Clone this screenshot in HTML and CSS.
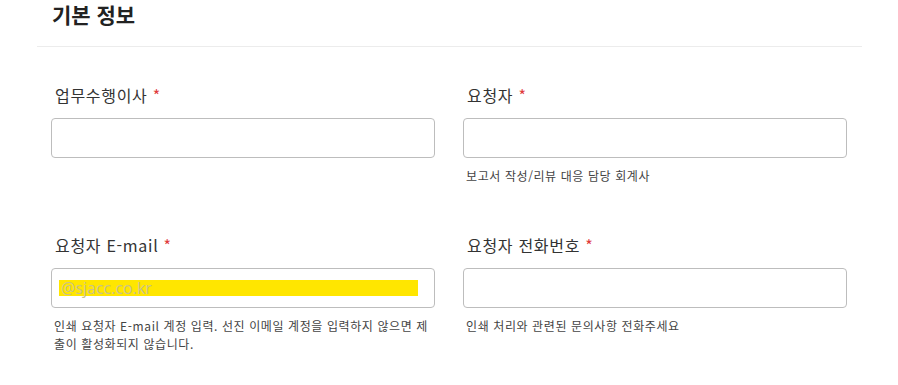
FILE: index.html
```html
<!DOCTYPE html>
<html lang="ko">
<head>
<meta charset="utf-8">
<title>기본 정보</title>
<link rel="stylesheet" href="styles.css">
</head>
<body>
<section class="section">
  <h2 class="title">기본 정보</h2>
  <div class="grid">
    <div class="field">
      <label class="label">업무수행이사 <span class="req">*</span></label>
      <div class="box"></div>
    </div>
    <div class="field">
      <label class="label">요청자 <span class="req">*</span></label>
      <div class="box"></div>
      <p class="help">보고서 작성/리뷰 대응 담당 회계사</p>
    </div>
    <div class="field">
      <label class="label">요청자 E-mail <span class="req">*</span></label>
      <div class="box"><span class="mark">@sjacc.co.kr</span></div>
      <p class="help">인쇄 요청자 E-mail 계정 입력. 선진 이메일 계정을 입력하지 않으면 제출이 활성화되지 않습니다.</p>
    </div>
    <div class="field">
      <label class="label">요청자 전화번호 <span class="req">*</span></label>
      <div class="box"></div>
      <p class="help">인쇄 처리와 관련된 문의사항 전화주세요</p>
    </div>
  </div>
</section>
</body>
</html>
```
FILE: styles.css
```css
html, body {
  margin: 0;
  padding: 0;
  background: #ffffff;
}
body {
  font-family: "Noto Sans CJK KR", "Noto Sans", sans-serif;
  color: #333333;
}
.section {
  margin-left: 37px;
  width: 825px;
}
.title {
  margin: 0;
  padding: 0 15px;
  height: 46px;
  font-size: 21px;
  font-weight: 700;
  line-height: 28px;
  color: #222222;
  border-bottom: 1px solid #ececec;
  box-sizing: content-box;
}
.grid {
  display: grid;
  grid-template-columns: 384px 384px;
  column-gap: 28px;
  row-gap: 48px;
  padding: 36px 14px 0;
}
.field {
  display: flex;
  flex-direction: column;
}
.label {
  padding-left: 4px;
  font-size: 16px;
  line-height: 24px;
  letter-spacing: 0.7px;
  color: #333333;
}
.req {
  color: #e03a3a;
}
.box {
  margin-top: 11px;
  height: 38px;
  border: 1px solid #bdbdbd;
  border-radius: 4px;
  display: flex;
  align-items: center;
  padding-left: 7px;
}
.mark {
  display: block;
  width: 359px;
  height: 16px;
  background: #ffe600;
  color: #c9c28a;
  font-family: "Open Sans", "Liberation Sans", sans-serif;
  font-size: 16px;
  line-height: 16px;
  padding-left: 2px;
  box-sizing: border-box;
}
.help {
  margin: 9px 0 0;
  padding-left: 3px;
  font-size: 12px;
  line-height: 18px;
  letter-spacing: 0.6px;
  word-break: break-all;
  color: #444444;
}
```
